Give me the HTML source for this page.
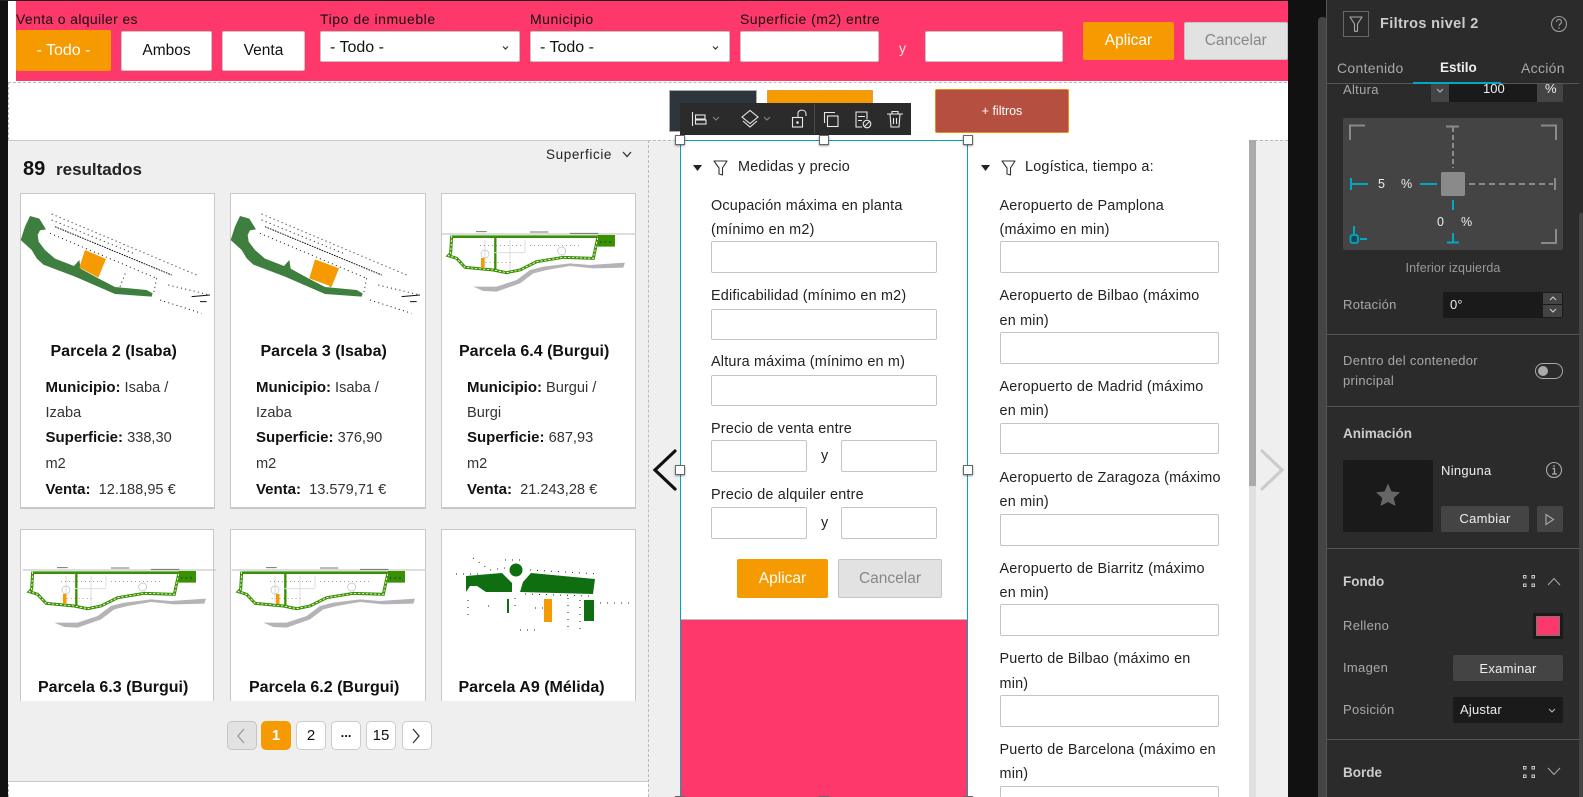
<!DOCTYPE html>
<html lang="es"><head><meta charset="utf-8"><title>Filtros nivel 2</title>
<style>
*{box-sizing:border-box}
html,body{margin:0;padding:0;width:1583px;height:797px;overflow:hidden;background:#111}
body{position:relative;font-family:"Liberation Sans",sans-serif;font-size:14px;color:#111}
.a{position:absolute}
.t{position:absolute;white-space:nowrap;line-height:20px;height:20px}
.c{text-align:center}
.b{position:absolute;display:flex;align-items:center;justify-content:center;border-radius:2px;white-space:nowrap}
.w{background:#fff;border:1px solid #c8c8c8}
.o{background:#f59a00;color:#fff;border:1px solid #f59a00}
.g{background:#e2e2e2;color:#888;border:1px solid #c4c4c4}
.i{position:absolute;background:#fff;border:1px solid #c4c4c4;border-radius:2px}
.card{position:absolute;background:#fff;border:1px solid #c8c8c8;border-bottom-width:2px;overflow:hidden}
.ct{position:absolute;font-weight:bold;font-size:16px;white-space:nowrap;line-height:20px;color:#111}
.cl{position:absolute;white-space:nowrap;line-height:20px;font-size:14.6px;color:#333}
.cl b{font-size:15px;color:#111}
.h{position:absolute;width:10px;height:10px;background:#fff;border:1px solid #666;box-shadow:0 1px 2px rgba(0,0,0,.4)}
.l{font-size:14.4px;letter-spacing:.2px;color:#222}
.p{font-size:13px;color:#a8a8a8;letter-spacing:.3px}
.pb{font-weight:bold;color:#ccc;font-size:13.5px}
.d{position:absolute;left:1327px;width:252px;height:1px;background:#555}
.pg{position:absolute;top:721px;height:29px;width:30px;background:#fff;border:1px solid #ccc;border-radius:5px;display:flex;align-items:center;justify-content:center;font-size:15px}
</style></head><body>

<!-- Canvas -->
<div class="a" style="left:8px;top:0;width:1279.5px;height:797px;background:#fff"></div>
<div class="a" style="left:0;top:0;width:1583px;height:1px;background:#222"></div>
<div class="a" style="left:16px;top:1px;width:1271.5px;height:80px;background:#ff386b"></div>
<div class="a" style="left:8px;top:82px;width:1279px;border-top:1px dashed #bbb"></div>
<div class="a" style="left:8px;top:82px;height:715px;border-left:1px dashed #bbb"></div>

<!-- Top filter -->
<div class="t" style="left:16px;top:9px;font-size:14px;letter-spacing:.35px">Venta o alquiler es</div>
<div class="b o" style="left:16px;top:30px;width:95px;height:41px;font-size:16px">- Todo -</div>
<div class="b w" style="left:121px;top:31px;width:91px;height:40px;font-size:15.5px">Ambos</div>
<div class="b w" style="left:222px;top:31px;width:83px;height:40px;font-size:15.500px">Venta</div>
<div class="t" style="left:320px;top:9px;letter-spacing:.55px">Tipo de inmueble</div>
<div class="i" style="left:320px;top:31px;width:200px;height:31px"></div>
<div class="t" style="left:330px;top:38px;font-size:16px">- Todo -</div>
<div class="t" style="left:530px;top:9px;letter-spacing:.5px">Municipio</div>
<div class="i" style="left:530px;top:31px;width:200px;height:31px"></div>
<div class="t" style="left:540px;top:38px;font-size:16px">- Todo -</div>
<div class="t" style="left:740px;top:9px;letter-spacing:.45px">Superficie (m2) entre</div>
<div class="i" style="left:740px;top:31px;width:139px;height:31px"></div>
<div class="t" style="left:899px;top:38px;color:#fff;opacity:.85">y</div>
<div class="i" style="left:925px;top:31px;width:138px;height:31px"></div>
<div class="b o" style="left:1083px;top:22px;width:91px;height:38px;font-size:15.5px">Aplicar</div>
<div class="b g" style="left:1184px;top:22px;width:103.5px;height:38px;font-size:15.5px">Cancelar</div>

<!-- Buttons row -->
<div class="a" style="left:669px;top:90px;width:88px;height:42px;background:#2f353d;border:1px solid #aaa"></div>
<div class="a" style="left:767px;top:90px;width:106px;height:42px;background:#f59a00;border:1px dashed #d9a050"></div>
<div class="b" style="left:935px;top:89px;width:134px;height:44px;background:#b55040;border:1px solid #f08a10;color:#fff;font-size:12.5px">+ filtros</div>

<!-- Results panel -->
<div class="a" style="left:8px;top:140px;width:640px;height:642px;background:#efefef;border-top:1px solid #c8c8c8;border-bottom:1px solid #c8c8c8"></div>
<div class="a" style="left:648px;top:140px;width:639.5px;height:657px;background:#efefef;border-left:1px dashed #bbb;border-top:1px dashed #bbb"></div>
<div class="t" style="left:23px;top:159px;font-size:20px;font-weight:bold;color:#111">89</div>
<div class="t" style="left:56px;top:160px;font-size:17px;font-weight:bold;color:#222">resultados</div>
<div class="t" style="left:546px;top:145px;font-size:13.5px;letter-spacing:.6px;color:#222">Superficie</div>

<div class="card" style="left:20px;top:193px;width:195px;height:316px"></div>
<div class="card" style="left:230px;top:193px;width:196px;height:316px"></div>
<div class="card" style="left:441px;top:193px;width:195px;height:316px"></div>
<div class="card" style="left:20px;top:529px;width:194px;height:173px;border-bottom:0"></div>
<div class="card" style="left:230px;top:529px;width:196px;height:173px;border-bottom:0"></div>
<div class="card" style="left:441px;top:529px;width:195px;height:173px;border-bottom:0"></div>

<div class="ct" style="left:50.5px;top:342px">Parcela 2 (Isaba)</div>
<div class="cl" style="left:45.5px;top:378px"><b>Municipio:</b> Isaba /</div>
<div class="cl" style="left:45.5px;top:403px">Izaba</div>
<div class="cl" style="left:45.5px;top:428px"><b>Superficie:</b> 338,30</div>
<div class="cl" style="left:45.5px;top:454px">m2</div>
<div class="cl" style="left:45.5px;top:480px"><b>Venta:</b>&nbsp;&nbsp;12.188,95 €</div>

<div class="ct" style="left:260.5px;top:342px">Parcela 3 (Isaba)</div>
<div class="cl" style="left:256px;top:378px"><b>Municipio:</b> Isaba /</div>
<div class="cl" style="left:256px;top:403px">Izaba</div>
<div class="cl" style="left:256px;top:428px"><b>Superficie:</b> 376,90</div>
<div class="cl" style="left:256px;top:454px">m2</div>
<div class="cl" style="left:256px;top:480px"><b>Venta:</b>&nbsp;&nbsp;13.579,71 €</div>

<div class="ct" style="left:459px;top:342px">Parcela 6.4 (Burgui)</div>
<div class="cl" style="left:467px;top:378px"><b>Municipio:</b> Burgui /</div>
<div class="cl" style="left:467px;top:403px">Burgi</div>
<div class="cl" style="left:467px;top:428px"><b>Superficie:</b> 687,93</div>
<div class="cl" style="left:467px;top:454px">m2</div>
<div class="cl" style="left:467px;top:480px"><b>Venta:</b>&nbsp;&nbsp;21.243,28 €</div>

<div class="ct" style="left:38px;top:678px">Parcela 6.3 (Burgui)</div>
<div class="ct" style="left:249px;top:678px">Parcela 6.2 (Burgui)</div>
<div class="ct" style="left:458.5px;top:678px">Parcela A9 (Mélida)</div>

<div class="a" style="left:8px;top:701px;width:640px;height:80px;background:#efefef"></div>
<div class="pg" style="left:226.5px;background:#e2e2e2;border-color:#c4c4c4"></div>
<div class="pg" style="left:261px;background:#f59a00;border-color:#f59a00;color:#fff;font-weight:bold">1</div>
<div class="pg" style="left:296px">2</div>
<div class="pg" style="left:331px;font-weight:bold;padding-bottom:6px;font-size:13px">...</div>
<div class="pg" style="left:366px">15</div>
<div class="pg" style="left:401.5px"></div>

<!-- Filter panel left -->
<div class="a" style="left:680px;top:140px;width:288px;height:479px;background:#fff"></div>
<div class="a" style="left:680px;top:619px;width:288px;height:178px;background:#ff386b;border-top:1px solid #bbb"></div>
<div class="a" style="left:968px;top:140px;width:281px;height:657px;background:#fff"></div>
<div class="a" style="left:1249px;top:140px;width:7px;height:657px;background:#e0e0e0"></div>
<div class="a" style="left:1249px;top:140px;width:7px;height:346px;background:#aaa"></div>

<div class="t l" style="left:738px;top:157px">Medidas y precio</div>
<div class="t l" style="left:711px;top:196px">Ocupación máxima en planta</div>
<div class="t l" style="left:711px;top:220px">(mínimo en m2)</div>
<div class="i" style="left:711px;top:241px;width:226px;height:32px"></div>
<div class="t l" style="left:711px;top:286px">Edificabilidad (mínimo en m2)</div>
<div class="i" style="left:711px;top:309px;width:226px;height:31px"></div>
<div class="t l" style="left:711px;top:352px">Altura máxima (mínimo en m)</div>
<div class="i" style="left:711px;top:375px;width:226px;height:31px"></div>
<div class="t l" style="left:711px;top:419px">Precio de venta entre</div>
<div class="i" style="left:711px;top:440px;width:96px;height:32px"></div>
<div class="t l" style="left:821px;top:446px">y</div>
<div class="i" style="left:841px;top:440px;width:96px;height:32px"></div>
<div class="t l" style="left:711px;top:485px">Precio de alquiler entre</div>
<div class="i" style="left:711px;top:507px;width:96px;height:32px"></div>
<div class="t l" style="left:821px;top:513px">y</div>
<div class="i" style="left:841px;top:507px;width:96px;height:32px"></div>
<div class="b o" style="left:737px;top:559px;width:91px;height:39px;font-size:15.5px">Aplicar</div>
<div class="b g" style="left:838px;top:559px;width:104px;height:39px;font-size:15.5px">Cancelar</div>

<!-- Filter panel right -->
<div class="t l" style="left:1025px;top:157px">Logística, tiempo a:</div>
<div class="t l" style="left:999.5px;top:196px">Aeropuerto de Pamplona</div>
<div class="t l" style="left:999.5px;top:220px">(máximo en min)</div>
<div class="i" style="left:999.5px;top:241px;width:219.5px;height:32px"></div>
<div class="t l" style="left:999.5px;top:286px">Aeropuerto de Bilbao (máximo</div>
<div class="t l" style="left:999.5px;top:311px">en min)</div>
<div class="i" style="left:999.5px;top:332px;width:219.5px;height:32px"></div>
<div class="t l" style="left:999.5px;top:377px">Aeropuerto de Madrid (máximo</div>
<div class="t l" style="left:999.5px;top:401px">en min)</div>
<div class="i" style="left:999.5px;top:423px;width:219.5px;height:31px"></div>
<div class="t l" style="left:999.5px;top:468px">Aeropuerto de Zaragoza (máximo</div>
<div class="t l" style="left:999.5px;top:492px">en min)</div>
<div class="i" style="left:999.5px;top:514px;width:219.5px;height:32px"></div>
<div class="t l" style="left:999.5px;top:559px">Aeropuerto de Biarritz (máximo</div>
<div class="t l" style="left:999.5px;top:583px">en min)</div>
<div class="i" style="left:999.5px;top:604px;width:219.5px;height:32px"></div>
<div class="t l" style="left:999.5px;top:649px">Puerto de Bilbao (máximo en</div>
<div class="t l" style="left:999.5px;top:674px">min)</div>
<div class="i" style="left:999.5px;top:695px;width:219.5px;height:32px"></div>
<div class="t l" style="left:999.5px;top:740px">Puerto de Barcelona (máximo en</div>
<div class="t l" style="left:999.5px;top:764px">min)</div>
<div class="i" style="left:999.5px;top:786px;width:219.5px;height:32px"></div>

<!-- Selection -->
<div class="a" style="left:680px;top:140px;width:288px;height:660px;border:1px solid #00a5bd"></div>
<div class="h" style="left:675px;top:135px"></div><div class="h" style="left:819px;top:135px"></div><div class="h" style="left:962.5px;top:135px"></div>
<div class="h" style="left:675px;top:465px"></div><div class="h" style="left:962.5px;top:465px"></div>
<div class="h" style="left:675px;top:796px"></div><div class="h" style="left:819px;top:796px"></div><div class="h" style="left:962.5px;top:796px"></div>

<!-- Toolbar -->
<div class="a" style="left:680px;top:103px;width:231px;height:32px;background:#2b2b2b"></div>
<div class="a" style="left:814px;top:104px;width:1px;height:30px;background:#4a4a4a"></div>

<!-- Right side panel -->
<div class="a" style="left:1288px;top:0;width:295px;height:797px;background:#111"></div>
<div class="a" style="left:1318px;top:17px;width:9px;height:780px;background:#444;border-radius:4px 4px 0 0"></div>
<div class="a" style="left:1326px;top:0;width:257px;height:797px;background:#2b2b2b;border-left:1px solid #555"></div>
<div class="a" style="left:1579px;top:213px;width:4px;height:584px;background:#444;border-radius:2px 0 0 0"></div>

<div class="a" style="left:1343px;top:11px;width:26px;height:26px;border:1px solid #666"></div>
<div class="t pb" style="left:1380px;top:14px;font-size:14.5px;letter-spacing:.35px">Filtros nivel 2</div>
<div class="t p" style="left:1337px;top:58px;font-size:14px">Contenido</div>
<div class="t" style="left:1440px;top:58px;font-weight:bold;color:#eee;font-size:13.5px">Estilo</div>
<div class="t p" style="left:1521px;top:58px;font-size:14px">Acción</div>
<div class="a" style="left:1327px;top:83px;width:252px;height:1px;background:#555"></div>
<div class="a" style="left:1431px;top:84px;width:18px;height:18px;background:#444"></div>
<div class="a" style="left:1449px;top:84px;width:88px;height:18px;background:#1a1a1a"></div>
<div class="a" style="left:1537px;top:84px;width:26px;height:18px;background:#444"></div>
<div class="a" style="left:1413px;top:82px;width:88px;height:2px;background:#00a9c1"></div>
<div class="t p" style="left:1343px;top:80px">Altura</div>
<div class="t" style="left:1483px;top:79px;color:#eee;font-size:13px">100</div>
<div class="t" style="left:1545px;top:79px;color:#eee;font-size:13px">%</div>

<div class="a" style="left:1343px;top:118px;width:220px;height:132px;background:#444;border-radius:2px"></div>
<div class="a" style="left:1441px;top:172px;width:24px;height:24px;background:#8a8a8a;border-radius:2px"></div>
<div class="t" style="left:1378px;top:174px;color:#eee;font-size:12.5px">5</div>
<div class="t" style="left:1401px;top:174px;color:#eee;font-size:12.5px">%</div>
<div class="t" style="left:1437px;top:212px;color:#eee;font-size:12.5px">0</div>
<div class="t" style="left:1461px;top:212px;color:#eee;font-size:12.5px">%</div>
<div class="t p c" style="left:1343px;top:258px;width:220px;font-size:12.5px;color:#999;letter-spacing:.1px">Inferior izquierda</div>

<div class="t p" style="left:1343px;top:295px">Rotación</div>
<div class="a" style="left:1443px;top:292px;width:120px;height:26px;background:#1a1a1a;border-radius:2px"></div>
<div class="t" style="left:1450px;top:295px;color:#eee;font-size:13px">0°</div>
<div class="a" style="left:1543px;top:293px;width:19px;height:11px;background:#444"></div>
<div class="a" style="left:1543px;top:305px;width:19px;height:12px;background:#444"></div>
<div class="d" style="top:334px"></div>
<div class="t p" style="left:1343px;top:351px">Dentro del contenedor</div>
<div class="t p" style="left:1343px;top:371px">principal</div>
<div class="a" style="left:1535px;top:363px;width:28px;height:16px;border:1px solid #aaa;border-radius:8px"></div>
<div class="a" style="left:1538px;top:366px;width:10px;height:10px;background:#aaa;border-radius:50%"></div>
<div class="d" style="top:406px"></div>
<div class="t pb" style="left:1343px;top:424px">Animación</div>
<div class="a" style="left:1343px;top:460px;width:90px;height:72px;background:#1a1a1a;border-radius:2px"></div>
<div class="t" style="left:1441px;top:461px;color:#eee;font-size:13px;letter-spacing:.3px">Ninguna</div>
<div class="b" style="left:1441px;top:506px;width:88px;height:26px;background:#444;color:#eee;font-size:13px;letter-spacing:.3px;padding-bottom:1px">Cambiar</div>
<div class="a" style="left:1537px;top:506px;width:26px;height:26px;background:#444;border-radius:2px"></div>
<div class="d" style="top:548px"></div>
<div class="t pb" style="left:1343px;top:572px">Fondo</div>
<div class="t p" style="left:1343px;top:616px">Relleno</div>
<div class="a" style="left:1533px;top:613px;width:30px;height:26px;background:#1a1a1a"></div>
<div class="a" style="left:1536px;top:616px;width:24px;height:20px;background:#ff386b;border:1px solid #777"></div>
<div class="t p" style="left:1343px;top:658px">Imagen</div>
<div class="b" style="left:1453px;top:655px;width:110px;height:26px;background:#444;color:#eee;font-size:13px;letter-spacing:.3px">Examinar</div>
<div class="t p" style="left:1343px;top:700px">Posición</div>
<div class="a" style="left:1453px;top:697px;width:110px;height:26px;background:#1a1a1a;border-radius:2px"></div>
<div class="t" style="left:1460px;top:700px;color:#eee;font-size:13px;letter-spacing:.2px">Ajustar</div>
<div class="d" style="top:739px"></div>
<div class="t pb" style="left:1343px;top:763px">Borde</div>

<!-- Icons and drawings -->
<svg class="a" style="left:0;top:0" width="1583" height="797" viewBox="0 0 1583 797" fill="none">
<defs>
<g id="plot1">
<path fill="#3e7e3e" d="M90 78L118 86L138 118L120 121L113 135L116 155L135 180L165 206L222 228L238 210L242 236L295 265L345 291L440 300L458 310L455 320L345 312L225 260L130 224L110 205L95 180L62 150L75 110Z"/>
<g stroke="#111" stroke-width="3" stroke-dasharray="3 10">
<path d="M155 72L590 255"/><path d="M150 130L470 265"/><path d="M505 285L630 315"/><path d="M480 330L605 370"/><path d="M470 265L460 315"/><path d="M360 290L378 245"/><path d="M155 90L400 190"/>
</g>
<path stroke="#111" stroke-width="3" stroke-dasharray="5 3" d="M165 110L515 255"/>
<path stroke="#111" stroke-width="3" d="M575 320L630 315M600 335L620 335"/>
</g>
<g id="plot3">
<path stroke="#bbb" stroke-width="3" d="M35 132H615"/>
<path stroke="#777" stroke-width="3" d="M138 125H170M300 126H355M420 130H505"/>
<path fill="#b4b4b8" d="M130 290L200 290L260 270L300 240L340 230L420 220L480 225L585 218L580 233L490 235L420 228L350 240L310 250L270 280L200 305L160 303Z"/>
<path stroke="#3a9000" stroke-width="8" d="M62 140H503"/>
<path fill="#3a9000" d="M503 135H555V170H503Z"/>
<path stroke="#154" stroke-width="5" stroke-dasharray="4 10" d="M510 156H550"/>
<path stroke="#3a9000" stroke-width="9" d="M65 137L62 190L55 197L80 205L105 232L190 240L230 248L270 240L320 215L400 202L490 205L503 145"/>
<path stroke="#fff" stroke-width="2.5" stroke-dasharray="7 5" d="M65 137L62 190L55 197L80 205L105 232L190 240L230 248L270 240L320 215L400 202L490 205L503 145"/>
<path stroke="#3a9000" stroke-width="7" d="M196 140V240"/>
<path stroke="#ddd" stroke-width="3" d="M190 188H285M285 150V185M165 150V235M240 150V240"/>
<circle cx="165" cy="192" r="12" stroke="#bbb" stroke-width="2"/><circle cx="395" cy="183" r="12" stroke="#bbb" stroke-width="2"/>
<path stroke="#666" stroke-width="2" stroke-dasharray="3 9" d="M150 166H280M300 166H450M155 218H250"/>
</g>
</defs>

<!-- drawings -->
<use href="#plot1" transform="translate(0,190) scale(.3333)"/>
<path fill="#f59a00" transform="translate(0,190) scale(.3333)" d="M255 180L318 207L295 263L238 232Z"/>
<use href="#plot1" transform="translate(210,190) scale(.3333)"/>
<path fill="#f59a00" transform="translate(210,190) scale(.3333)" d="M315 208L387 235L365 290L298 265Z"/>
<use href="#plot3" transform="translate(430,190) scale(.3333)"/>
<rect x="481" y="258" width="3.5" height="10" fill="#f59a00"/>
<use href="#plot3" transform="translate(11,526) scale(.3333)"/>
<rect x="63" y="594" width="3.5" height="10" fill="#f59a00"/>
<use href="#plot3" transform="translate(220,526) scale(.3333)"/>
<rect x="276" y="594" width="3.5" height="10" fill="#f59a00"/>
<g fill="#0f6e0f">
<path d="M466 576L502 573L512 583V592H486L477 586L470 586L466 592Z"/><path d="M520 592L523 582L531 573L595 579L593 594Z"/>
<circle cx="516" cy="570" r="6.5"/><rect x="584" y="600" width="10" height="21"/><rect x="507" y="599" width="2" height="14"/>
</g>
<rect x="544" y="599" width="8" height="23" fill="#f59a00"/>
<g stroke="#222" stroke-width="1" stroke-dasharray="1 6">
<path d="M473 558L490 570L505 568M505 560H520M530 570L600 574M456 574H480M468 600V615M488 606H494M515 598V612M568 598V628M580 600V630M600 603H630M535 608H546M520 630H535"/>
<path d="M525 594L590 596"/>
</g>

<!-- top select chevrons -->
<g stroke="#333" stroke-width="1.2"><path d="M503 46.5L505.5 49L508 46.5M713 46.5L715.5 49L718 46.5"/></g>
<path stroke="#333" stroke-width="1.3" d="M623 152L627 156.5L631 152"/>

<!-- pagination arrows -->
<path stroke="#999" stroke-width="1.3" d="M244 729L238 736L244 743"/>
<path stroke="#333" stroke-width="1.3" d="M413 729L419 736L413 743"/>

<!-- big nav chevrons -->
<path stroke="#111" stroke-width="3.2" stroke-linecap="round" d="M675 451L655 470L675 489"/>
<path stroke="#ccc" stroke-width="3.2" stroke-linecap="round" d="M1262 451L1282 470L1262 489"/>

<!-- accordion headers -->
<path fill="#222" d="M693 165H702L697.5 171Z"/>
<path stroke="#333" stroke-width="1.1" stroke-linejoin="round" d="M714 161H727L722.5 168V175L719 174V168Z"/>
<path fill="#222" d="M981 165H990L985.5 171Z"/>
<path stroke="#333" stroke-width="1.1" stroke-linejoin="round" d="M1002 161H1015L1010.5 168V175L1007 174V168Z"/>

<!-- toolbar icons -->
<g stroke="#e8e8e8" stroke-width="1.1">
<path d="M692.500 112V126"/><rect x="695.500" y="115" width="9.500" height="4"/><rect x="695.500" y="120" width="10.500" height="4"/>
<path d="M742 117L750 110.500L758 117L750 123.500Z"/><path d="M743 121L750 127L757 121"/>
<rect x="792.500" y="117.500" width="10" height="9.500"/><path d="M798 117V113C798.500 109 806 109 806 114V116"/>
<path d="M824.500 123V112.500H835"/><rect x="827.500" y="116" width="10.500" height="10.500"/>
<path d="M862 127H856V112H867V119"/><path d="M858 116.500H865M858 120.500H862"/>
<circle cx="867" cy="124" r="3.800"/><path d="M864.500 126.500L869.500 121.500"/>
<path d="M887 114H903M890 114L891 127H899L900 114M892 114V111.500H898V114M893.500 118V124M896.500 118V124"/>
</g>
<circle cx="797.500" cy="122.500" r="1.300" fill="#e8e8e8"/>
<g stroke="#888" stroke-width="1"><path d="M713 117L716 120L719 117M764 117L767 120L770 117"/></g>

<!-- panel header icons -->
<path stroke="#aaa" stroke-width="1.1" stroke-linejoin="round" d="M1350 17H1362L1357.5 24V31Q1356 32 1354.5 31V24Z"/>
<circle cx="1559" cy="24" r="7.5" stroke="#999" stroke-width="1.1"/>
<path stroke="#999" stroke-width="1.2" d="M1556.5 22C1556.5 18.5 1561.5 18.5 1561.5 22C1561.5 24 1559 24 1559 26"/><circle cx="1559" cy="28" r=".8" fill="#999"/>
<path stroke="#bbb" stroke-width="1.1" d="M1437 89L1440 92L1443 89"/>

<!-- position widget -->
<g stroke="#8a8a8a" stroke-width="2">
<path d="M1350 140V125.500H1365"/><path d="M1541 125.500H1556V140"/><path d="M1556 229V243H1541"/>
<path d="M1446 126.500H1459"/><path stroke-dasharray="5 3" d="M1453 127V168"/>
<path stroke-dasharray="6 4" d="M1469 184H1553"/><path d="M1555 178V190"/>
</g>
<g stroke="#00a9c1" stroke-width="2">
<path d="M1351 178V190M1351 184H1368"/><path d="M1420 184H1437"/><path d="M1453 200V210"/>
<path d="M1453 233V242M1447 242.500H1459"/>
<path d="M1354 226V234M1360 239H1367"/>
</g>
<rect x="1350.500" y="235" width="7.500" height="8" rx="2" fill="#0b4a56" stroke="#00a9c1" stroke-width="1.800"/>

<!-- rotation steppers -->
<g stroke="#ccc" stroke-width="1.1"><path d="M1550 300L1553 297L1556 300M1550 309L1553 312L1556 309"/></g>

<!-- info & star & play -->
<circle cx="1554" cy="470" r="7.500" stroke="#aaa" stroke-width="1.100"/>
<path stroke="#aaa" stroke-width="1.300" d="M1552.500 468.500H1554.500V474M1552 474H1557"/><circle cx="1554" cy="466" r=".9" fill="#aaa"/>
<path fill="#666" d="M1388 483.500L1391.500 491.500L1400 492.300L1393.700 498L1395.500 506L1388 502L1380.500 506L1382.300 498L1376 492.300L1384.500 491.500Z"/>
<path stroke="#aaa" stroke-width="1.100" d="M1546 514.500L1553.500 519.500L1546 524.500Z"/>

<!-- grid+chevrons -->
<g stroke="#ccc" stroke-width="1">
<rect x="1523.500" y="575.500" width="2.500" height="2.500"/><rect x="1532" y="575.500" width="2.500" height="2.500"/><rect x="1523.500" y="584" width="2.500" height="2.500"/><rect x="1532" y="584" width="2.500" height="2.500"/>
<rect x="1523.500" y="766.500" width="2.500" height="2.500"/><rect x="1532" y="766.500" width="2.500" height="2.500"/><rect x="1523.500" y="775" width="2.500" height="2.500"/><rect x="1532" y="775" width="2.500" height="2.500"/>
<path d="M1548 585L1554 578.500L1560 585M1548 768L1554 774.500L1560 768" stroke="#aaa"/>
</g>
<path stroke="#bbb" stroke-width="1" d="M1549 709L1552 712L1555 709"/>
</svg>
</body></html>
